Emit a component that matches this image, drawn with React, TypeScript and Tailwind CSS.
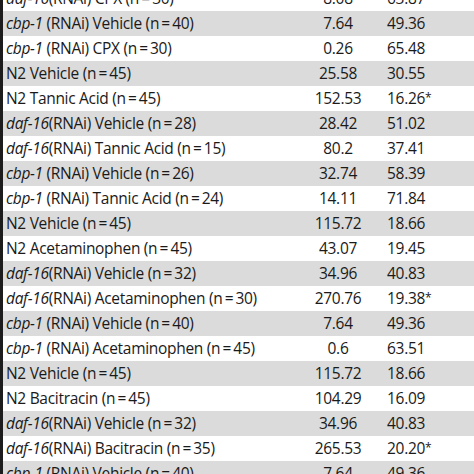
type Row = {
  gene?: string;
  gap?: boolean;
  label: string;
  mean: string;
  pct: string;
  star?: boolean;
};

const rows: Row[] = [
  { gene: "daf-16", label: "(RNAi) CPX (n\u2009=\u200930)", mean: "8.08", pct: "63.87" },
  { gene: "cbp-1", gap: true, label: "(RNAi) Vehicle (n\u2009=\u200940)", mean: "7.64", pct: "49.36" },
  { gene: "cbp-1", gap: true, label: "(RNAi) CPX (n\u2009=\u200930)", mean: "0.26", pct: "65.48" },
  { label: "N2 Vehicle (n\u2009=\u200945)", mean: "25.58", pct: "30.55" },
  { label: "N2 Tannic Acid (n\u2009=\u200945)", mean: "152.53", pct: "16.26", star: true },
  { gene: "daf-16", label: "(RNAi) Vehicle (n\u2009=\u200928)", mean: "28.42", pct: "51.02" },
  { gene: "daf-16", label: "(RNAi) Tannic Acid (n\u2009=\u200915)", mean: "80.2", pct: "37.41" },
  { gene: "cbp-1", gap: true, label: "(RNAi) Vehicle (n\u2009=\u200926)", mean: "32.74", pct: "58.39" },
  { gene: "cbp-1", gap: true, label: "(RNAi) Tannic Acid (n\u2009=\u200924)", mean: "14.11", pct: "71.84" },
  { label: "N2 Vehicle (n\u2009=\u200945)", mean: "115.72", pct: "18.66" },
  { label: "N2 Acetaminophen (n\u2009=\u200945)", mean: "43.07", pct: "19.45" },
  { gene: "daf-16", label: "(RNAi) Vehicle (n\u2009=\u200932)", mean: "34.96", pct: "40.83" },
  { gene: "daf-16", label: "(RNAi) Acetaminophen (n\u2009=\u200930)", mean: "270.76", pct: "19.38", star: true },
  { gene: "cbp-1", gap: true, label: "(RNAi) Vehicle (n\u2009=\u200940)", mean: "7.64", pct: "49.36" },
  { gene: "cbp-1", gap: true, label: "(RNAi) Acetaminophen (n\u2009=\u200945)", mean: "0.6", pct: "63.51" },
  { label: "N2 Vehicle (n\u2009=\u200945)", mean: "115.72", pct: "18.66" },
  { label: "N2 Bacitracin (n\u2009=\u200945)", mean: "104.29", pct: "16.09" },
  { gene: "daf-16", label: "(RNAi) Vehicle (n\u2009=\u200932)", mean: "34.96", pct: "40.83" },
  { gene: "daf-16", label: "(RNAi) Bacitracin (n\u2009=\u200935)", mean: "265.53", pct: "20.20", star: true },
  { gene: "cbp-1", gap: true, label: "(RNAi) Vehicle (n\u2009=\u200940)", mean: "7.64", pct: "49.36" },
];

export default function App() {
  return (
    <div className="h-[474px] w-[474px] overflow-hidden bg-white border-l-[3px] border-[#1c1c1c] font-['Open_Sans',sans-serif] text-[15.5px] tracking-[-0.3px] text-[#1a1a1a]">
      <div className="-mt-[14px]">
        {rows.map((row, i) => (
          <div
            key={i}
            className={`grid h-[25px] grid-cols-[291px_88px_1fr] items-center ${i % 2 === 1 ? "bg-[#dbdbdb]" : "bg-white"}`}
          >
            <div className="pl-[3px] whitespace-nowrap">
              {row.gene && <i>{row.gene}</i>}
              {row.gene && row.gap ? " " : ""}
              {row.label}
            </div>
            <div className="text-center">{row.mean}</div>
            <div className="pl-[5px]">
              {row.pct}
              {row.star && <span className="relative -top-[2px] text-[12px]">*</span>}
            </div>
          </div>
        ))}
      </div>
    </div>
  );
}
